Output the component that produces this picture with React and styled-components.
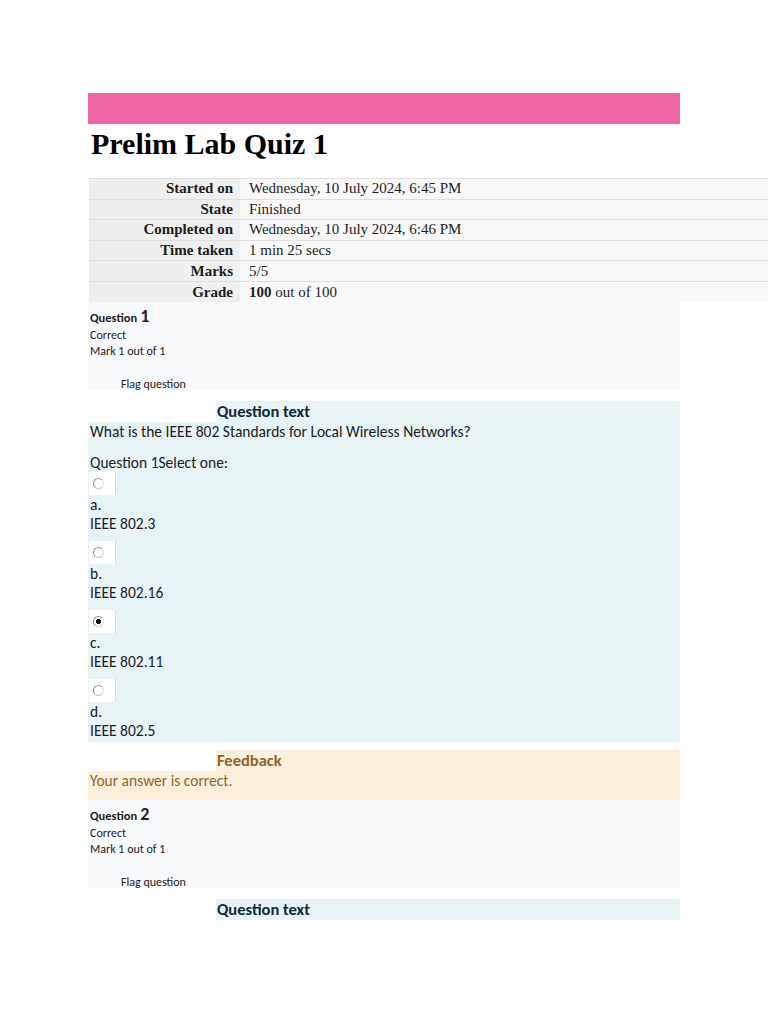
import React from "react";
import styled, { createGlobalStyle } from "styled-components";

const GlobalStyle = createGlobalStyle`
  html, body {
    margin: 0;
    padding: 0;
    background: #ffffff;
    overflow-x: hidden;
  }
  body {
    font-family: "Carlito", "Lato", "Noto Sans", sans-serif;
    color: #1d2125;
  }
`;

const Page = styled.div`
  width: 768px;
  overflow: hidden;
  padding: 93px 0 0 88px;
  box-sizing: border-box;
  min-height: 1024px;
`;

const Column = styled.div`
  width: 592px;
`;

const PinkBar = styled.div`
  height: 31px;
  background: #ee66a3;
`;

const Title = styled.h1`
  margin: 0;
  padding: 1px 0 0 3px;
  height: 54px;
  box-sizing: border-box;
  font-family: "Liberation Serif", "Times New Roman", serif;
  font-weight: 700;
  font-size: 30px;
  line-height: 38px;
  color: #000;
`;

const Summary = styled.table`
  width: 679px;
  margin-left: 1px;
  border-collapse: collapse;
  font-family: "Liberation Serif", "Times New Roman", serif;
  font-size: 15px;
  color: #1d1d1d;
  border-top: 1px solid #dedede;
`;

const Row = styled.tr`
  height: 20.6px;
  border-bottom: 1px solid #dedede;
  &:last-child {
    border-bottom: none;
  }
`;

const Label = styled.th`
  width: 144px;
  padding: 0 7px 0 0;
  text-align: right;
  font-weight: 700;
  background: #efefef;
  white-space: nowrap;
`;

const Value = styled.td`
  padding: 0 0 0 9px;
  background: #f9f9f9;
  white-space: nowrap;
`;

const Info = styled.div`
  background: #f8f9fa;
  height: 88px;
  padding: 5px 0 0 2px;
  box-sizing: border-box;
  font-size: 12px;
  line-height: 16px;
  color: #1d2125;
`;

const QNo = styled.div`
  font-weight: 700;
  font-size: 12.5px;
  line-height: 18px;
  span {
    font-size: 18px;
    margin-left: 3px;
  }
`;

const Flag = styled.div`
  margin: 17px 0 0 31px;
  font-size: 12px;
`;

const Heading = styled.div`
  margin: ${(p) => p.$top}px 0 0 128px;
  height: 21px;
  padding-left: 1px;
  background: ${(p) => p.$bg};
  color: ${(p) => p.$color};
  font-weight: 700;
  font-size: 16.5px;
  line-height: 21px;
`;

const QBody = styled.div`
  background: #e7f3f5;
  padding: 0 0 2px 2px;
  font-size: 15.5px;
  line-height: 19px;
  color: #1d2125;
`;

const Prompt = styled.div`
  margin-bottom: 12px;
`;

const Option = styled.div`
  margin-bottom: 8px;
  &:last-child {
    margin-bottom: 0;
  }
`;

const RadioBox = styled.div`
  width: 27px;
  height: 23px;
  margin: 0 0 0 -1px;
  background: #ffffff;
  border-right: 1px solid #d3dcde;
  display: flex;
  align-items: center;
  padding-left: 4px;
  box-sizing: border-box;
`;

const Radio = styled.span`
  width: 9px;
  height: 9px;
  border-radius: 50%;
  border: 1px solid #8f8f8f;
  border-right-color: #dcdcdc;
  border-bottom-color: #c8c8c8;
  background: ${(p) =>
    p.$checked ? "radial-gradient(circle, #111 0 2.2px, #fff 2.8px)" : "#fff"};
`;

const Feedback = styled.div`
  background: #fcefdc;
  color: #8e662e;
  padding: 0 0 10px 2px;
  font-size: 15.5px;
  line-height: 19px;
`;

const summary = [
  ["Started on", "Wednesday, 10 July 2024, 6:45 PM"],
  ["State", "Finished"],
  ["Completed on", "Wednesday, 10 July 2024, 6:46 PM"],
  ["Time taken", "1 min 25 secs"],
  ["Marks", "5/5"],
  [
    "Grade",
    <>
      <b>100</b> out of 100
    </>,
  ],
];

const options = [
  ["a.", "IEEE 802.3", false],
  ["b.", "IEEE 802.16", false],
  ["c.", "IEEE 802.11", true],
  ["d.", "IEEE 802.5", false],
];

function QuestionInfo({ n }) {
  return (
    <Info>
      <QNo>
        Question<span>{n}</span>
      </QNo>
      <div>Correct</div>
      <div>Mark 1 out of 1</div>
      <Flag>Flag question</Flag>
    </Info>
  );
}

export default function App() {
  return (
    <>
      <GlobalStyle />
      <Page>
        <Column>
          <PinkBar />
          <Title>Prelim Lab Quiz 1</Title>
          <Summary>
            <tbody>
              {summary.map(([k, v]) => (
                <Row key={k}>
                  <Label>{k}</Label>
                  <Value>{v}</Value>
                </Row>
              ))}
            </tbody>
          </Summary>
          <QuestionInfo n={1} />
          <Heading $top={11} $bg="#e7f3f5" $color="#0f2a3a">
            Question text
          </Heading>
          <QBody>
            <Prompt>What is the IEEE 802 Standards for Local Wireless Networks?</Prompt>
            <div>Question 1Select one:</div>
            {options.map(([l, t, c]) => (
              <Option key={l}>
                <RadioBox>
                  <Radio $checked={c} />
                </RadioBox>
                <div>{l}</div>
                <div>{t}</div>
              </Option>
            ))}
          </QBody>
          <Heading $top={8} $bg="#fcefdc" $color="#8e662e">
            Feedback
          </Heading>
          <Feedback>Your answer is correct.</Feedback>
          <QuestionInfo n={2} />
          <Heading $top={11} $bg="#e7f3f5" $color="#0f2a3a">
            Question text
          </Heading>
        </Column>
      </Page>
    </>
  );
}
